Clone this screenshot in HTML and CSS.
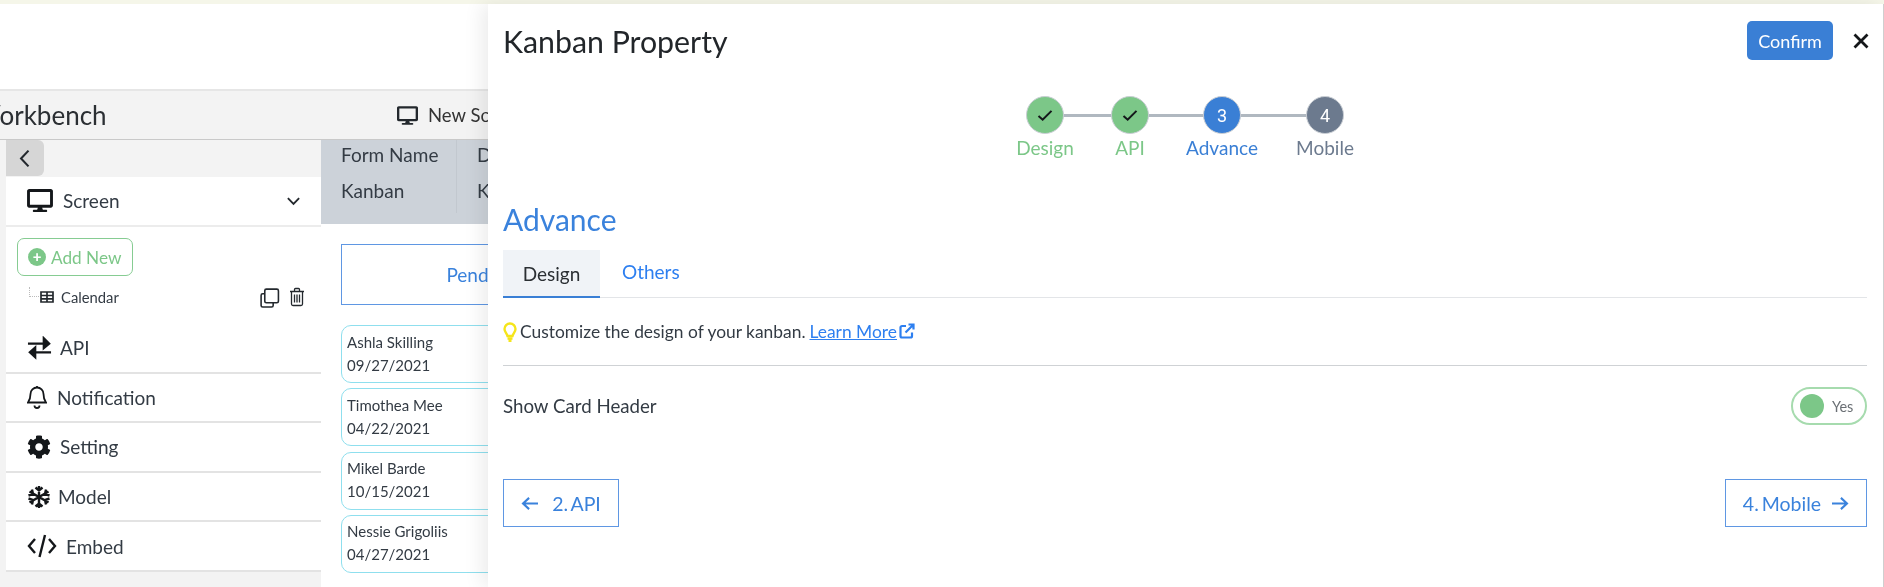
FILE: index.html
```html
<!DOCTYPE html>
<html lang="en">
<head>
<meta charset="utf-8">
<title>Kanban Property</title>
<link rel="stylesheet" href="styles.css">
</head>
<body>
<div class="app">
  <div class="top-strip"></div>
  <div class="blank"></div>
  <div class="bar">
    <span class="bar-title">Workbench</span>
    <span class="bar-action">
      <svg class="ic-new" viewBox="0 0 576 512"><path d="M528 0H48C21.5 0 0 21.5 0 48v320c0 26.5 21.5 48 48 48h192l-16 48h-72c-13.3 0-24 10.7-24 24s10.7 24 24 24h272c13.3 0 24-10.7 24-24s-10.7-24-24-24h-72l-16-48h192c26.5 0 48-21.5 48-48V48c0-26.5-21.5-48-48-48zm-16 352H64V64h448v288z"/></svg>
      New Screen
    </span>
  </div>
  <div class="work">
    <aside class="side">
      <div class="back-row">
        <div class="back-btn"><svg viewBox="0 0 16 24"><path d="M12 3 3.500 12l8.500 9"/></svg></div>
      </div>
      <div class="side-row screen-row">
        <svg class="ic-screen" viewBox="0 0 576 512"><path d="M528 0H48C21.5 0 0 21.5 0 48v320c0 26.5 21.5 48 48 48h192l-16 48h-72c-13.3 0-24 10.7-24 24s10.7 24 24 24h272c13.3 0 24-10.7 24-24s-10.7-24-24-24h-72l-16-48h192c26.5 0 48-21.5 48-48V48c0-26.5-21.5-48-48-48zm-16 352H64V64h448v288z"/></svg>
        <span class="row-label">Screen</span>
        <svg class="ic-chev" viewBox="0 0 16 10"><path d="M2 2l6 6 6-6"/></svg>
      </div>
      <div class="add-block">
        <button class="add-btn"><span class="plus">+</span>Add New</button>
        <div class="tree-item">
          <span class="tree-line"></span>
          <svg class="ic-cal" viewBox="0 0 14 12"><path d="M1 1h12v10H1zM1 4.500h12M7 1v10M1 7.800h12"/></svg>
          <span class="tree-label">Calendar</span>
          <span class="tree-actions">
            <svg class="ic-copy" viewBox="0 0 20 20"><path d="M7 2h10a1.500 1.500 0 0 1 1.500 1.500v10A1.500 1.500 0 0 1 17 15H7a1.500 1.500 0 0 1-1.500-1.500v-10A1.500 1.500 0 0 1 7 2zM5.500 6.500h-2A1.500 1.500 0 0 0 2 8v9.500A1.500 1.500 0 0 0 3.500 19H12a1.500 1.500 0 0 0 1.500-1.500V15"/></svg>
            <svg class="ic-trash" viewBox="0 0 16 20"><path d="M1 4.500h14M5.500 4.500V2.500a1 1 0 0 1 1-1h3a1 1 0 0 1 1 1v2M2.500 4.500v12.500a1.500 1.500 0 0 0 1.500 1.500h8a1.500 1.500 0 0 0 1.500-1.500V4.500M5.500 7.500v8M8 7.500v8M10.500 7.500v8"/></svg>
          </span>
        </div>
      </div>
      <div class="side-row">
        <svg class="ic-api" viewBox="0 0 26 24"><path d="M1 7.500h22M17.500 2l5.500 5.500-5.500 4.500z M25 16.500H3M8.500 11.500 3 16.500l5.500 5z"/></svg>
        <span class="row-label gap-api">API</span>
      </div>
      <div class="side-row">
        <svg class="ic-bell" viewBox="0 0 20 24"><path d="M10 2.500a6.500 6.500 0 0 0-6.500 6.500c0 5-1 6.500-2.500 8.500h18c-1.500-2-2.500-3.500-2.500-8.500A6.500 6.500 0 0 0 10 2.500zM10 1v1.500M7.500 20.500a2.500 2.500 0 0 0 5 0"/></svg>
        <span class="row-label gap-bell">Notification</span>
      </div>
      <div class="side-row">
        <svg class="ic-cog" viewBox="0 0 512 512"><path d="M487.400 315.700l-42.600-24.600c4.300-23.200 4.300-47 0-70.200l42.600-24.600c4.900-2.800 7.100-8.600 5.500-14-11.100-35.600-30-67.800-54.700-94.600-3.800-4.100-10-5.100-14.800-2.300L380.800 110c-17.900-15.400-38.500-27.300-60.800-35.100V25.800c0-5.600-3.900-10.500-9.400-11.700-36.700-8.200-74.300-7.800-109.200 0-5.500 1.200-9.400 6.100-9.400 11.700V75c-22.200 7.900-42.800 19.800-60.800 35.100L88.700 85.500c-4.900-2.800-11-1.900-14.800 2.300-24.700 26.700-43.600 58.900-54.700 94.600-1.700 5.400.6 11.200 5.500 14L67.300 221c-4.300 23.200-4.300 47 0 70.200l-42.600 24.600c-4.900 2.800-7.100 8.600-5.500 14 11.100 35.600 30 67.800 54.700 94.600 3.800 4.100 10 5.100 14.800 2.300l42.600-24.600c17.900 15.400 38.500 27.300 60.800 35.100v49.200c0 5.600 3.900 10.500 9.400 11.700 36.700 8.200 74.300 7.800 109.200 0 5.500-1.200 9.400-6.100 9.400-11.700v-49.200c22.200-7.900 42.800-19.800 60.800-35.100l42.600 24.600c4.900 2.800 11 1.900 14.800-2.300 24.700-26.700 43.600-58.900 54.700-94.600 1.500-5.500-.7-11.300-5.600-14.100zM256 336c-44.100 0-80-35.900-80-80s35.900-80 80-80 80 35.900 80 80-35.900 80-80 80z"/></svg>
        <span class="row-label gap-cog">Setting</span>
      </div>
      <div class="side-row">
        <svg class="ic-snow" viewBox="0 0 24 24"><path d="M12 1v22M2.500 6.500l19 11M21.500 6.500l-19 11M8.500 2.500 12 5.500l3.500-3M8.500 21.500 12 18.500l3.500 3M1.500 10.500 6 9 5 4.500M22.500 13.500 18 15l1 4.500M22.500 10.500 18 9l1-4.500M1.500 13.500 6 15l-1 4.500"/></svg>
        <span class="row-label gap-model">Model</span>
      </div>
      <div class="side-row">
        <svg class="ic-code" viewBox="0 0 30 24"><path d="M8 5 2 12l6 7M22 5l6 7-6 7M18 1 12.500 23"/></svg>
        <span class="row-label gap-code">Embed</span>
      </div>
    </aside>
    <main class="main">
      <div class="form-head">
        <div class="form-col col-first"><span>Form Name</span><span>Kanban</span></div>
        <div class="form-col"><span>Description</span><span>Kanban</span></div>
      </div>
      <div class="pending">Pending</div>
      <div class="card"><span>Ashla Skilling</span><span>09/27/2021</span></div>
      <div class="card"><span>Timothea Mee</span><span>04/22/2021</span></div>
      <div class="card"><span>Mikel Barde</span><span>10/15/2021</span></div>
      <div class="card"><span>Nessie Grigoliis</span><span>04/27/2021</span></div>
    </main>
  </div>

  <section class="drawer">
    <header class="drawer-head">
      <h1 class="drawer-title">Kanban Property</h1>
      <button class="confirm">Confirm</button>
      <svg class="ic-close" viewBox="0 0 16 16"><path d="M1.500 1.500l13 13M14.500 1.500l-13 13"/></svg>
    </header>
    <div class="stepper">
      <div class="step step-a done">
        <span class="dot"><svg viewBox="0 0 18 14"><path d="M2 7.500l4.500 4L16 2"/></svg></span>
        <span class="step-label">Design</span>
      </div>
      <div class="step step-b done">
        <span class="dot"><svg viewBox="0 0 18 14"><path d="M2 7.500l4.500 4L16 2"/></svg></span>
        <span class="step-label">API</span>
      </div>
      <div class="step step-c active">
        <span class="dot">3</span>
        <span class="step-label">Advance</span>
      </div>
      <div class="step step-d todo">
        <span class="dot">4</span>
        <span class="step-label">Mobile</span>
      </div>
    </div>
    <h2 class="section-title">Advance</h2>
    <nav class="tabs">
      <span class="tab tab-on">Design</span>
      <span class="tab">Others</span>
    </nav>
    <p class="hint">
      <svg class="ic-bulb" viewBox="0 0 14 20"><path d="M7 1.500a5.500 5.500 0 0 0-5.500 5.500c0 3 2.500 4.500 3 7h5c.5-2.500 3-4 3-7A5.500 5.500 0 0 0 7 1.500z"/><path d="M4.500 16.500h5M5.500 18.800h3"/></svg>
      <span>Customize the design of your kanban.</span>
      <a class="learn">Learn More</a>
      <svg class="ic-ext" viewBox="0 0 16 16"><path d="M7 3H3a1.500 1.500 0 0 0-1.500 1.500V13A1.500 1.500 0 0 0 3 14.500h8.500A1.500 1.500 0 0 0 13 13V9.500M6.500 9.500 14 2M9.500 1.500h5v5"/></svg>
    </p>
    <div class="setting">
      <span>Show Card Header</span>
      <span class="toggle"><span class="knob"></span>Yes</span>
    </div>
    <div class="nav-btns">
      <button class="nav-btn prev">
        <svg class="ic-arrow" viewBox="0 0 20 16"><path d="M18 8H2M8.500 2 2 8l6.500 6"/></svg>2. API
      </button>
      <button class="nav-btn next">4. Mobile
        <svg class="ic-arrow" viewBox="0 0 20 16"><path d="M2 8h16M11.500 2 18 8l-6.500 6"/></svg>
      </button>
    </div>
  </section>
</div>
</body>
</html>
```
FILE: styles.css
```css
* { box-sizing: border-box; }
html, body { margin: 0; padding: 0; }
body {
  width: 1884px;
  height: 587px;
  overflow: hidden;
  background: #fff;
  font-family: Lato, "Open Sans", sans-serif;
  color: #333b44;
}
svg { display: block; flex: none; }
button { font-family: inherit; cursor: pointer; background: none; }

.app { position: relative; width: 1884px; height: 587px; overflow: hidden; filter: blur(0.4px); }
.top-strip { height: 4px; background: #f5f6e9; }
.blank { height: 87px; background: #fff; border-bottom: 2px solid #e6e6e6; }

.bar {
  height: 49px;
  display: flex;
  align-items: center;
  background: #f3f3f3;
  border-bottom: 1px solid #c9c9c9;
}
.bar-title { margin-left: -26px; width: 423px; font-size: 26px; color: #2b2f33; }
.bar-action { display: flex; align-items: center; gap: 10px; font-size: 18.500px; white-space: nowrap; color: #333; }
.ic-new { width: 21px; height: 19px; fill: #23282d; }

.work { display: flex; height: 447px; }
.side { width: 321px; padding-left: 6px; background: #f3f3f3; flex: none; }
.back-row { height: 36px; background: #f3f3f3; }
.back-btn {
  width: 38px;
  height: 36px;
  background: #d6d6d6;
  border-radius: 0 6px 6px 0;
  display: flex;
  align-items: center;
  justify-content: center;
}
.back-btn svg { width: 14px; height: 21px; fill: none; stroke: #23282d; stroke-width: 2.400; }

.side-row {
  display: flex;
  align-items: center;
  height: 49.600px;
  padding-left: 21px;
  background: #fff;
  border-bottom: 2px solid #e3e3e3;
}
.screen-row { height: 50px; margin-top: 1px; padding-bottom: 1px; border-bottom-color: #ececec; }
.row-label { font-size: 19px; color: #333b44; }
.ic-screen { width: 26px; height: 23px; fill: #14171a; }
.screen-row .row-label { margin-left: 10px; }
.ic-chev { width: 15px; height: 10px; margin-left: auto; margin-right: 20px; fill: none; stroke: #23282d; stroke-width: 2; }

.add-block { height: 97px; background: #fff; padding: 11px 0 0 11px; }
.add-btn {
  display: flex;
  align-items: center;
  gap: 5px;
  width: 116px;
  height: 38px;
  padding: 0 0 0 10px;
  border: 1.500px solid #86cc92;
  border-radius: 7px;
  background: #fff;
  font-size: 17.200px;
  color: #7cc788;
}
.plus {
  width: 18px;
  height: 18px;
  border-radius: 50%;
  background: #7cc788;
  color: #fff;
  font-size: 15px;
  font-weight: 900;
  line-height: 17px;
  text-align: center;
}
.tree-item { display: flex; align-items: center; height: 22px; margin-top: 10px; padding-left: 12px; position: relative; }
.tree-line { width: 10px; height: 10px; margin-top: -10px; border-left: 1px dotted #bbb; border-bottom: 1px dotted #bbb; }
.ic-cal { width: 14px; height: 12px; margin-left: 1px; fill: none; stroke: #23282d; stroke-width: 1.700; }
.tree-label { margin-left: 7px; font-size: 14.800px; color: #333b44; }
.tree-actions { display: flex; align-items: center; gap: 9px; margin-left: auto; margin-right: 16px; }
.ic-copy { width: 21px; height: 21px; fill: none; stroke: #23282d; stroke-width: 1.500; }
.ic-trash { width: 16px; height: 20px; fill: none; stroke: #23282d; stroke-width: 1.300; }

.ic-api { width: 25px; height: 24px; fill: #14171a; stroke: #14171a; stroke-width: 2.400; }
.gap-api { margin-left: 8px; }
.ic-bell { width: 20px; height: 24px; fill: none; stroke: #14171a; stroke-width: 1.800; }
.gap-bell { margin-left: 10px; }
.ic-cog { width: 24px; height: 24px; fill: #14171a; }
.gap-cog { margin-left: 9px; }
.gap-model { margin-left: 7px; }
.ic-snow { width: 24px; height: 24px; fill: none; stroke: #14171a; stroke-width: 2.400; }
.ic-code { width: 30px; height: 24px; fill: none; stroke: #14171a; stroke-width: 2.400; }
.gap-code { margin-left: 9px; }

.main { flex: 1; background: #fff; min-width: 0; }
.form-head { display: flex; height: 84px; background: #ccd2d9; }
.form-col {
  display: flex;
  flex-direction: column;
  gap: 12px;
  padding-top: 3px;
  font-size: 19px;
  line-height: 24px;
  color: #333b44;
  height: 73px;
  padding-left: 20px;
}
.col-first { width: 136px; border-right: 1px solid #c2c8cf; }
.pending {
  margin: 20px 0 0 20px;
  height: 61px;
  width: 278px;
  border: 1px solid #5f97e3;
  display: flex;
  align-items: center;
  justify-content: center;
  font-size: 19px;
  color: #3a82dc;
  background: #fff;
}
.card {
  display: flex;
  flex-direction: column;
  justify-content: center;
  gap: 5px;
  margin: 5.300px 0 0 20px;
  width: 440px;
  height: 58px;
  padding: 0 0 2px 5px;
  border: 1.500px solid #8fdfee;
  border-radius: 10px;
  font-size: 15px;
  line-height: 18px;
  color: #333b44;
}
.pending + .card { margin-top: 20px; }

.drawer {
  position: absolute;
  top: 4px;
  left: 488px;
  right: 0;
  bottom: 0;
  padding: 0 16px 0 15px;
  background: #fff;
  border-right: 1px solid #cfcfcf;
  box-shadow: -6px 0 18px rgba(0, 0, 0, 0.08);
}
.drawer-head { display: flex; align-items: flex-start; height: 88px; padding-top: 17px; }
.drawer-title { margin: 0 auto 0 0; font-size: 30.300px; font-weight: 400; line-height: 40px; color: #22262a; }
.confirm {
  width: 86px;
  height: 39px;
  border: 0;
  border-radius: 5px;
  background: #3a7fd5;
  color: #fff;
  font-size: 18px;
}
.ic-close { width: 16px; height: 16px; margin: 12px -2px 0 20px; fill: none; stroke: #14171a; stroke-width: 2.800; }

.stepper {
  position: relative;
  height: 68px;
  display: flex;
  font-size: 19px;
}
.stepper::before {
  content: "";
  position: absolute;
  top: 22px;
  left: 542px;
  width: 280px;
  height: 3px;
  background: #b0b8c0;
}
.step { position: absolute; top: 4px; display: flex; flex-direction: column; align-items: center; width: 120px; }
.step-a { left: 482px; }
.step-b { left: 567px; }
.step-c { left: 659px; }
.step-d { left: 762px; }
.dot {
  position: relative;
  width: 38px;
  height: 38px;
  border-radius: 50%;
  border: 1px solid #c9ced4;
  display: flex;
  align-items: center;
  justify-content: center;
  color: #fff;
  font-family: Roboto, Lato, sans-serif;
  font-size: 18px;
}
.dot svg { width: 18px; height: 13px; fill: none; stroke: #14171a; stroke-width: 2.200; }
.step-label { margin-top: 2px; line-height: 24px; }
.done .dot { background: #7cc788; }
.done .step-label { color: #7cc788; }
.active .dot { background: #3a7fd5; }
.active .step-label { color: #3a7fd5; }
.todo .dot { background: #6c7a8e; }
.todo .step-label { color: #6c7a8e; }

.section-title { margin: 37px 0 0; font-size: 30px; font-weight: 400; line-height: 44px; color: #3a82dc; height: 39px; }
.tabs { display: flex; height: 48px; margin-top: 14px; border-bottom: 1px solid #e3e5e8; font-size: 19px; }
.tab { padding: 10px 22px 0; height: 48px; color: #2d7ff0; }
.tab-on { width: 97px; padding: 12px 0 0; text-align: center; color: #2b2f33; background: #f0f3f7; border-bottom: 2px solid #3a7fd5; }

.hint {
  display: flex;
  align-items: center;
  height: 68px;
  margin: 0;
  font-size: 17.400px;
  color: #333b44;
  border-bottom: 1px solid #cfd2d5;
}
.ic-bulb { width: 14px; height: 20px; fill: none; stroke: #f5e51b; stroke-width: 2.400; margin-right: 3px; }
.learn { margin-left: 4px; color: #2d7ff0; text-decoration: underline; }
.ic-ext { width: 16px; height: 16px; margin: -2px 0 0 2px; fill: none; stroke: #2d7ff0; stroke-width: 2.200; }

.setting { display: flex; align-items: center; justify-content: space-between; height: 82px; padding-bottom: 2px; font-size: 18.700px; color: #333b44; }
.toggle {
  display: flex;
  align-items: center;
  width: 76px;
  height: 38px;
  padding-left: 7px;
  gap: 8px;
  border: 2px solid #a6dbae;
  border-radius: 19px;
  font-size: 14.500px;
  color: #6a6f74;
}
.knob { width: 24px; height: 24px; border-radius: 50%; background: #7cc788; }

.nav-btns { display: flex; justify-content: space-between; margin-top: 31px; }
.nav-btn {
  display: flex;
  align-items: center;
  justify-content: center;
  gap: 12px;
  height: 48px;
  border: 1.500px solid #5f97e3;
  background: #fff;
  font-size: 19.500px;
  color: #3a82dc;
  word-spacing: -2px;
}
.prev { width: 116px; }
.next { width: 142px; gap: 9px; }
.ic-arrow { width: 19px; height: 15px; fill: none; stroke: #3a82dc; stroke-width: 2.200; }
```
